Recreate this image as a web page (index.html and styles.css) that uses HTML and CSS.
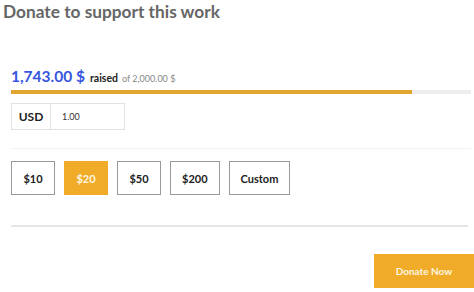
FILE: index.html
```html
<!DOCTYPE html>
<html>
<head>
<meta charset="utf-8">
<link rel="stylesheet" href="styles.css">
</head>
<body>
<div class="page">
  <h1 class="title">Donate to support this work</h1>
  <div class="content">
    <div class="raised-row">
      <span class="amount">1,743.00 $</span>
      <span class="raised">raised</span>
      <span class="goal">of 2,000.00 $</span>
    </div>
    <div class="bar"><div class="fill" style="width:87.15%"></div></div>
    <div class="currency">
      <div class="cur-code">USD</div>
      <div class="cur-value">1.00</div>
    </div>
    <hr class="sep light">
    <div class="choices">
      <button class="choice">$10</button>
      <button class="choice active">$20</button>
      <button class="choice">$50</button>
      <button class="choice">$200</button>
      <button class="choice custom">Custom</button>
    </div>
    <hr class="sep dark">
    <div class="actions">
      <button class="donate">Donate Now</button>
    </div>
  </div>
</div>
</body>
</html>
```
FILE: styles.css
```css
html, body {
  margin: 0;
  padding: 0;
  background: #fff;
}
body {
  font-family: Lato, "Open Sans", "Liberation Sans", sans-serif;
  width: 474px;
  height: 292px;
  overflow: hidden;
}
.page {
  display: flex;
  flex-direction: column;
}
.title {
  margin: 0;
  padding: 1px 0 0 3px;
  font-size: 17.3px;
  line-height: 22px;
  font-weight: 700;
  color: #666;
}
.content {
  padding: 0 3px 0 11px;
  display: flex;
  flex-direction: column;
}
.raised-row {
  margin-top: 44px;
  display: flex;
  align-items: baseline;
  gap: 5px;
  height: 22px;
}
.amount {
  color: #3656e0;
  font-size: 15.5px;
  font-weight: 700;
}
.raised {
  color: #222;
  font-size: 10.5px;
  font-weight: 700;
}
.goal {
  color: #888;
  font-size: 9px;
  margin-left: -1px;
}
.bar {
  margin-top: 1px;
  height: 4px;
  background: #eeeeee;
}
.fill {
  height: 100%;
  background: #e0a630;
}
.currency {
  margin-top: 9px;
  display: flex;
  width: 112px;
  height: 25px;
  border: 1px solid #e2e2e2;
}
.cur-code {
  width: 38px;
  border-right: 1px solid #e2e2e2;
  display: flex;
  align-items: center;
  justify-content: center;
  font-size: 12px;
  font-weight: 700;
  color: #222;
}
.cur-value {
  padding-left: 11px;
  display: flex;
  align-items: center;
  font-size: 9px;
  color: #333;
}
.sep {
  border: 0;
  margin: 0;
  height: 1px;
}
.sep.light {
  margin-top: 18px;
  background: #f2f2f2;
}
.sep.dark {
  margin-top: 30px;
  height: 2px;
  background: #e6e6e6;
  margin-right: 3px;
}
.choices {
  margin-top: 12px;
  display: flex;
  gap: 9px;
}
.choice {
  height: 34px;
  padding: 0 11px;
  min-width: 44px;
  background: #fff;
  border: 1px solid #999;
  font-family: inherit;
  font-size: 11px;
  font-weight: 700;
  color: #222;
}
.choice.active {
  background: #f0ac28;
  border-color: #f0ac28;
  color: #fff6e0;
}
.actions {
  margin-top: 27px;
  display: flex;
  justify-content: flex-end;
  margin-right: -3px;
}
.donate {
  width: 100px;
  height: 34px;
  background: #f0ac28;
  border: 0;
  font-family: inherit;
  font-size: 10px;
  font-weight: 700;
  color: #fff6e0;
}
```
